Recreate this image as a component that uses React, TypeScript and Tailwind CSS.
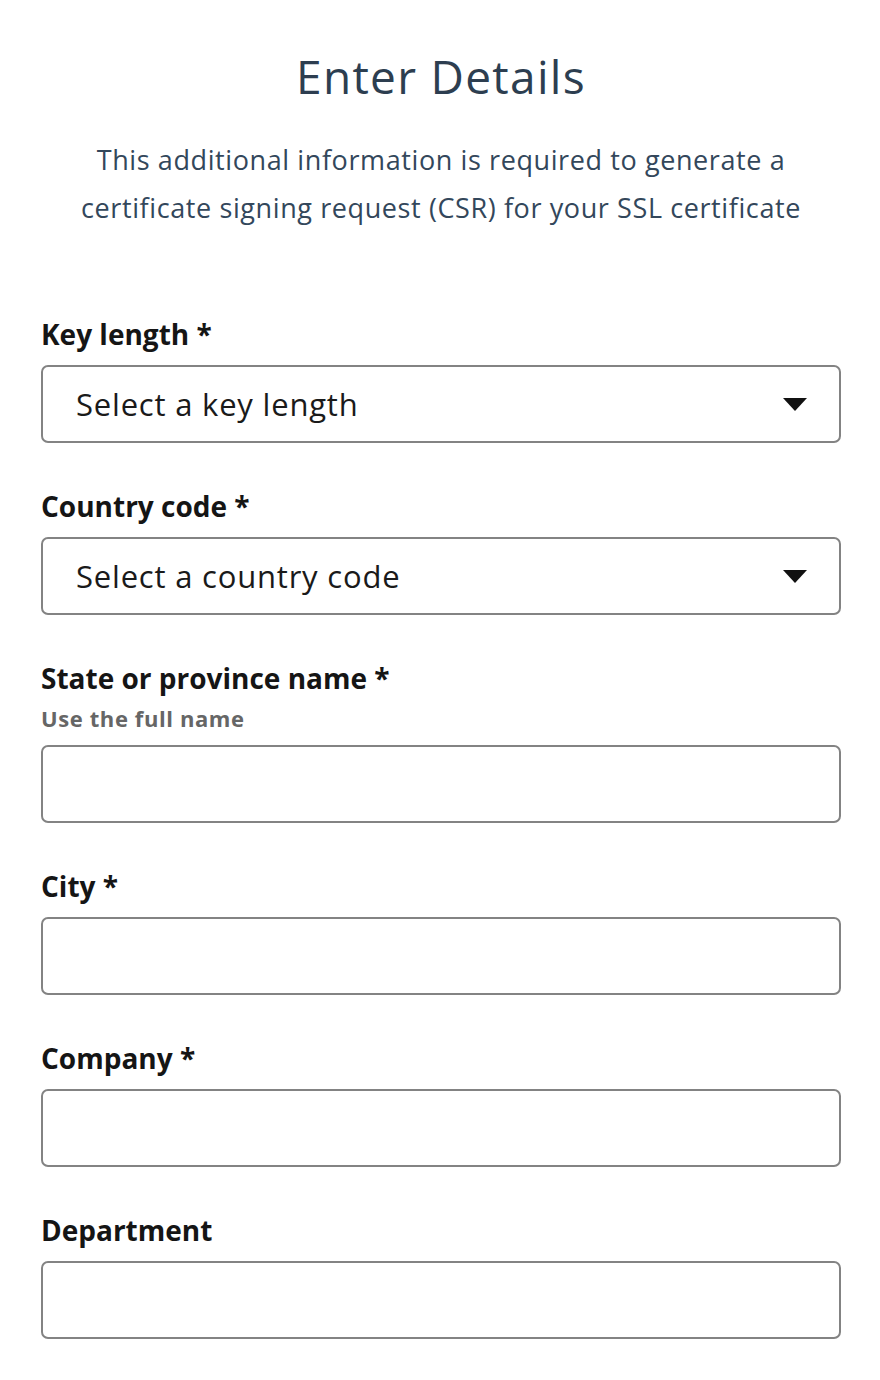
const font = { fontFamily: '"Open Sans", "Noto Sans", sans-serif' };

interface field {
    label: string
    required?: boolean
    help?: string
    placeholder?: string
    select?: boolean
}

const fields: field[] = [
    { label: "Key length", required: true, select: true, placeholder: "Select a key length" },
    { label: "Country code", required: true, select: true, placeholder: "Select a country code" },
    { label: "State or province name", required: true, help: "Use the full name" },
    { label: "City", required: true },
    { label: "Company", required: true },
    { label: "Department" },
];

function Caret() {
    return (
        <svg width="24" height="13" viewBox="0 0 24 13" className="shrink-0">
            <path d="M0 0 L24 0 L12 13 Z" fill="#111" />
        </svg>
    );
}

function Field({ f }: { f: field }) {
    return (
        <div className="flex flex-col">
            <label className="text-[28px] leading-[36px] font-bold text-[#151515]">
                {f.label}{f.required && " *"}
            </label>
            {f.help && (
                <div className="mt-[8px] text-[22px] leading-[28px] font-bold tracking-[0.6px] text-[#666]">{f.help}</div>
            )}
            {f.select ? (
                <div className="mt-[13px] h-[78px] w-full border-2 border-[#838383] rounded-[7px] flex items-center justify-between pl-[33px] pr-[32px] bg-white">
                    <span className="text-[31px] tracking-[0.8px] text-[#1a1a1a]">{f.placeholder}</span>
                    <Caret />
                </div>
            ) : (
                <input className="mt-[13px] h-[78px] w-full border-2 border-[#838383] rounded-[7px] bg-white px-[33px] text-[31px] outline-none" />
            )}
        </div>
    );
}

export default function App() {
    return (
        <div className="w-[880px] min-h-[1380px] bg-white pl-[41px] pr-[39px] pt-[48px] pb-[40px]" style={font}>
            <h1 className="text-center text-[46px] leading-[56px] tracking-[1.3px] text-[#2d3e50]">Enter Details</h1>
            <p className="mt-[32px] text-center text-[27px] leading-[48px] tracking-[0.6px] text-[#33475b]">
                This additional information is required to generate a
                <br />
                certificate signing request (CSR) for your SSL certificate
            </p>
            <div className="mt-[84px] flex flex-col gap-[45px]">
                {fields.map((f) => (
                    <Field key={f.label} f={f} />
                ))}
            </div>
        </div>
    );
}
